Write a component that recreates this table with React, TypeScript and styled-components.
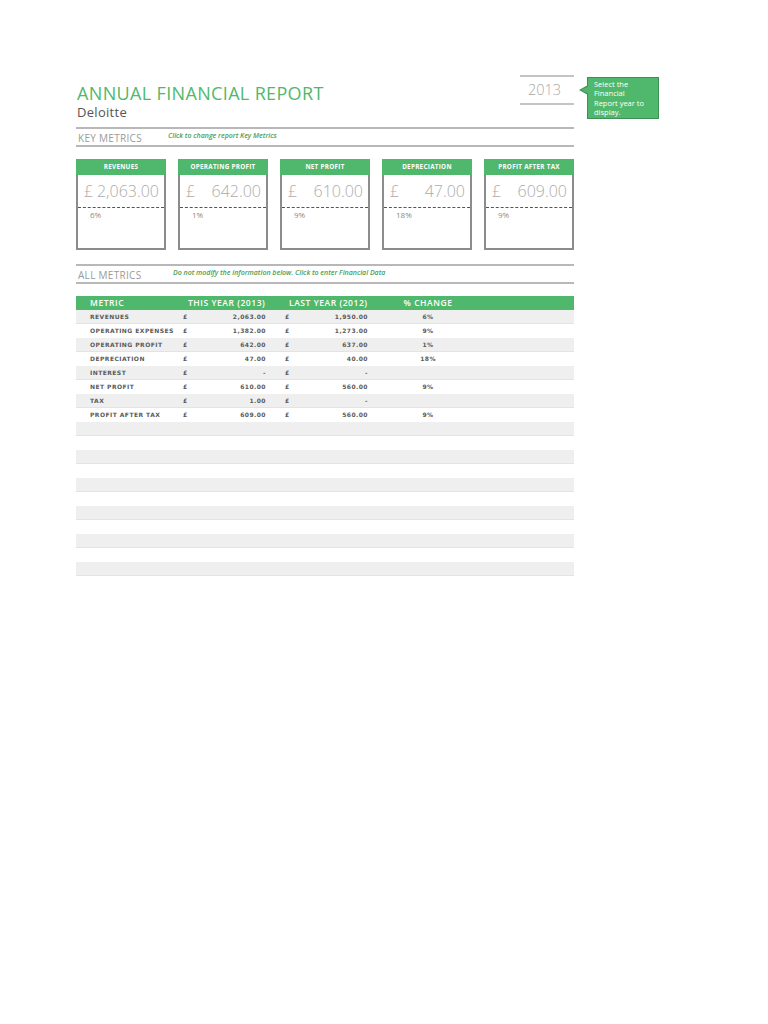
import React from "react";
import styled, { createGlobalStyle } from "styled-components";

const GREEN = "#50b86c";

const Global = createGlobalStyle`
  html, body { margin: 0; padding: 0; background: #fff; }
  body { font-family: "Open Sans", "DejaVu Sans", sans-serif; }
  * { box-sizing: border-box; }
`;

const Page = styled.div`
  position: relative;
  margin-left: 76px;
  padding-top: 75px;
  width: 498px;
`;

const Header = styled.header`
  display: flex;
  justify-content: space-between;
  align-items: flex-start;
  height: 52px;
`;

const TitleBlock = styled.div`
  padding-top: 7px;
  padding-left: 1px;
`;

const Title = styled.h1`
  margin: 0;
  font-size: 18px;
  line-height: 22px;
  font-weight: 400;
  color: ${GREEN};
  letter-spacing: 0.35px;
`;

const Company = styled.div`
  font-size: 13px;
  line-height: 16px;
  color: #555;
  letter-spacing: 0.3px;
`;

const YearBox = styled.div`
  width: 54px;
  height: 30px;
  border-top: 2px solid #c4c4c4;
  border-bottom: 2px solid #c4c4c4;
  font-size: 14.5px;
  line-height: 26px;
  color: #a8a8a8;
  padding-left: 8px;
  font-weight: 300;
`;

const Callout = styled.div`
  position: absolute;
  left: 511px;
  top: 77px;
  width: 72px;
  height: 42px;
  background: ${GREEN};
  border: 1px solid #3f8f55;
  color: #fff;
  font-size: 7.5px;
  line-height: 9.3px;
  padding: 2px 0 0 6px;
  &::before {
    content: "";
    position: absolute;
    left: -9px;
    top: 7px;
    border-style: solid;
    border-width: 5px 9px 5px 0;
    border-color: transparent #3f8f55 transparent transparent;
  }
  &::after {
    content: "";
    position: absolute;
    left: -7px;
    top: 8px;
    border-style: solid;
    border-width: 4px 8px 4px 0;
    border-color: transparent ${GREEN} transparent transparent;
  }
`;

const SectionBar = styled.div<{ $noteOffset: number }>`
  display: grid;
  grid-template-columns: ${(p) => p.$noteOffset}px 1fr;
  align-items: center;
  height: 20px;
  border-top: 2px solid #b8b8b8;
  border-bottom: 2px solid #b8b8b8;
  padding-left: 2px;
`;

const SectionLabel = styled.span`
  font-size: 10px;
  color: #9a9a9a;
  letter-spacing: 0.3px;
  padding-top: 1px;
`;

const SectionNote = styled.span`
  font-size: 7px;
  font-style: italic;
  font-weight: 600;
  color: #46a05c;
  margin-top: -4px;
`;

const Cards = styled.div`
  display: grid;
  grid-template-columns: repeat(5, 90px);
  gap: 12px;
  margin-top: 12px;
  margin-bottom: 14px;
`;

const Card = styled.div`
  display: flex;
  flex-direction: column;
  height: 91px;
`;

const CardHead = styled.div`
  height: 16px;
  background: ${GREEN};
  color: #fff;
  font-size: 6.3px;
  font-weight: 700;
  letter-spacing: 0.3px;
  text-align: center;
  line-height: 16px;
`;

const CardBody = styled.div`
  flex: 1;
  border: 2px solid #8c8c8c;
  border-top: none;
`;

const CardValue = styled.div`
  display: flex;
  justify-content: space-between;
  height: 33px;
  border-bottom: 1px dashed #555;
  padding: 5px 5px 0 6px;
  font-size: 16px;
  font-weight: 300;
  color: #ababab;
  line-height: 22px;
`;

const CardPct = styled.div`
  font-size: 8px;
  color: #8a8a8a;
  padding: 1px 0 0 12px;
`;

const Table = styled.div`
  margin-top: 12px;
`;

const cols = "104px 102px 102px 88px 1fr";

const HeadRow = styled.div`
  display: grid;
  grid-template-columns: ${cols};
  height: 14px;
  background: ${GREEN};
  color: #fff;
  font-size: 8.5px;
  line-height: 14px;
  font-weight: 600;
  letter-spacing: 0.55px;
`;

const HeadCell = styled.div<{ $pad?: number; $center?: boolean }>`
  padding-left: ${(p) => p.$pad ?? 0}px;
  text-align: ${(p) => (p.$center ? "center" : "left")};
  white-space: nowrap;
`;

const Row = styled.div<{ $shade: boolean }>`
  display: grid;
  grid-template-columns: ${cols};
  height: 14px;
  background: ${(p) => (p.$shade ? "#efefef" : "#fff")};
  border-bottom: 1px solid ${(p) => (p.$shade ? "#e3e3e3" : "#fff")};
  font-family: "DejaVu Sans", sans-serif;
  font-size: 6px;
  font-weight: 700;
  color: #5a5a5a;
  line-height: 14px;
  letter-spacing: 0.45px;
`;

const NameCell = styled.div`
  padding-left: 14px;
  white-space: nowrap;
`;

const MoneyCell = styled.div`
  display: flex;
  justify-content: space-between;
  padding: 0 16px 0 3px;
  white-space: nowrap;
`;

const PctCell = styled.div`
  text-align: center;
`;

const metrics = [
  { label: "REVENUES", value: "2,063.00", pct: "6%" },
  { label: "OPERATING PROFIT", value: "642.00", pct: "1%" },
  { label: "NET PROFIT", value: "610.00", pct: "9%" },
  { label: "DEPRECIATION", value: "47.00", pct: "18%" },
  { label: "PROFIT AFTER TAX", value: "609.00", pct: "9%" },
];

const rows: { name: string; cur: string; prev: string; pct: string }[] = [
  { name: "REVENUES", cur: "2,063.00", prev: "1,950.00", pct: "6%" },
  { name: "OPERATING EXPENSES", cur: "1,382.00", prev: "1,273.00", pct: "9%" },
  { name: "OPERATING PROFIT", cur: "642.00", prev: "637.00", pct: "1%" },
  { name: "DEPRECIATION", cur: "47.00", prev: "40.00", pct: "18%" },
  { name: "INTEREST", cur: "-", prev: "-", pct: "" },
  { name: "NET PROFIT", cur: "610.00", prev: "560.00", pct: "9%" },
  { name: "TAX", cur: "1.00", prev: "-", pct: "" },
  { name: "PROFIT AFTER TAX", cur: "609.00", prev: "560.00", pct: "9%" },
];

const TOTAL_ROWS = 19;

export default function App() {
  const allRows = Array.from({ length: TOTAL_ROWS }, (_, i) => rows[i]);
  return (
    <>
      <Global />
      <Page>
        <Header>
          <TitleBlock>
            <Title>ANNUAL FINANCIAL REPORT</Title>
            <Company>Deloitte</Company>
          </TitleBlock>
          <YearBox>2013</YearBox>
        </Header>
        <Callout>
          Select the
          <br />
          Financial
          <br />
          Report year to
          <br />
          display.
        </Callout>

        <SectionBar $noteOffset={90}>
          <SectionLabel>KEY METRICS</SectionLabel>
          <SectionNote>Click to change report Key Metrics</SectionNote>
        </SectionBar>

        <Cards>
          {metrics.map((m) => (
            <Card key={m.label}>
              <CardHead>{m.label}</CardHead>
              <CardBody>
                <CardValue>
                  <span>£</span>
                  <span>{m.value}</span>
                </CardValue>
                <CardPct>{m.pct}</CardPct>
              </CardBody>
            </Card>
          ))}
        </Cards>

        <SectionBar $noteOffset={95}>
          <SectionLabel>ALL METRICS</SectionLabel>
          <SectionNote>Do not modify the information below. Click to enter Financial Data</SectionNote>
        </SectionBar>

        <Table>
          <HeadRow>
            <HeadCell $pad={14}>METRIC</HeadCell>
            <HeadCell $pad={8}>THIS YEAR (2013)</HeadCell>
            <HeadCell $pad={7}>LAST YEAR (2012)</HeadCell>
            <HeadCell $center>% CHANGE</HeadCell>
            <HeadCell />
          </HeadRow>
          {allRows.map((r, i) => (
            <Row key={i} $shade={i % 2 === 0}>
              <NameCell>{r?.name}</NameCell>
              <MoneyCell>
                {r && (
                  <>
                    <span>£</span>
                    <span>{r.cur}</span>
                  </>
                )}
              </MoneyCell>
              <MoneyCell>
                {r && (
                  <>
                    <span>£</span>
                    <span>{r.prev}</span>
                  </>
                )}
              </MoneyCell>
              <PctCell>{r?.pct}</PctCell>
              <div />
            </Row>
          ))}
        </Table>
      </Page>
    </>
  );
}
